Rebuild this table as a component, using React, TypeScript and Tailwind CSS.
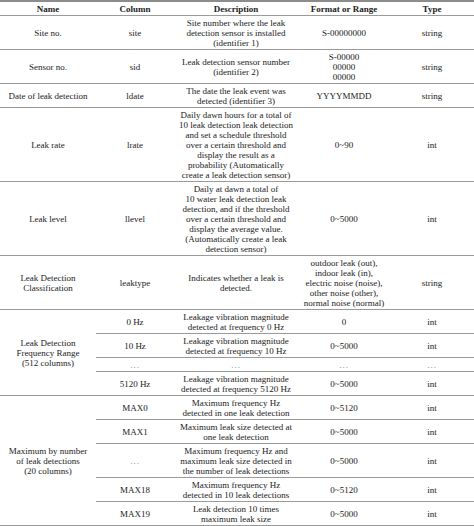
import React from 'react';

type Row = {
  name?: React.ReactNode;
  span?: number;
  col: string;
  desc: React.ReactNode;
  fmt: React.ReactNode;
  type: string;
};

const lines = (...parts: string[]) =>
  parts.map((p, i) => (
    <React.Fragment key={i}>
      {i > 0 && <br />}
      {p}
    </React.Fragment>
  ));

const dots = <span className="tracking-[1px] text-[#777]">...</span>;

const rows: Row[] = [
  {
    name: 'Site no.',
    col: 'site',
    desc: lines('Site number where the leak', 'detection sensor is installed', '(identifier 1)'),
    fmt: 'S-00000000',
    type: 'string',
  },
  {
    name: 'Sensor no.',
    col: 'sid',
    desc: lines('Leak detection sensor number', '(identifier 2)'),
    fmt: lines('S-00000', '00000', '00000'),
    type: 'string',
  },
  {
    name: 'Date of leak detection',
    col: 'ldate',
    desc: lines('The date the leak event was', 'detected (identifier 3)'),
    fmt: 'YYYYMMDD',
    type: 'string',
  },
  {
    name: 'Leak rate',
    col: 'lrate',
    desc: lines(
      'Daily dawn hours for a total of',
      '10 leak detection leak detection',
      'and set a schedule threshold',
      'over a certain threshold and',
      'display the result as a',
      'probability (Automatically',
      'create a leak detection sensor)'
    ),
    fmt: '0~90',
    type: 'int',
  },
  {
    name: 'Leak level',
    col: 'llevel',
    desc: lines(
      'Daily at dawn a total of',
      '10 water leak detection leak',
      'detection, and if the threshold',
      'over a certain threshold and',
      'display the average value.',
      '(Automatically create a leak',
      'detection sensor)'
    ),
    fmt: '0~5000',
    type: 'int',
  },
  {
    name: lines('Leak Detection', 'Classification'),
    col: 'leaktype',
    desc: lines('Indicates whether a leak is', 'detected.'),
    fmt: lines(
      'outdoor leak (out),',
      'indoor leak (in),',
      'electric noise (noise),',
      'other noise (other),',
      'normal noise (normal)'
    ),
    type: 'string',
  },
  {
    name: lines('Leak Detection', 'Frequency Range', '(512 columns)'),
    span: 4,
    col: '0 Hz',
    desc: lines('Leakage vibration magnitude', 'detected at frequency 0 Hz'),
    fmt: '0',
    type: 'int',
  },
  {
    col: '10 Hz',
    desc: lines('Leakage vibration magnitude', 'detected at frequency 10 Hz'),
    fmt: '0~5000',
    type: 'int',
  },
  { col: '...', desc: dots, fmt: dots, type: '...' },
  {
    col: '5120 Hz',
    desc: lines('Leakage vibration magnitude', 'detected at frequency 5120 Hz'),
    fmt: '0~5000',
    type: 'int',
  },
  {
    name: lines('Maximum by number', 'of leak detections', '(20 columns)'),
    span: 6,
    col: 'MAX0',
    desc: lines('Maximum frequency Hz', 'detected in one leak detection'),
    fmt: '0~5120',
    type: 'int',
  },
  {
    col: 'MAX1',
    desc: lines('Maximum leak size detected at', 'one leak detection'),
    fmt: '0~5000',
    type: 'int',
  },
  {
    col: '...',
    desc: lines('Maximum frequency Hz and', 'maximum leak size detected in', 'the number of leak detections'),
    fmt: '0~5000',
    type: 'int',
  },
  {
    col: 'MAX18',
    desc: lines('Maximum frequency Hz', 'detected in 10 leak detections'),
    fmt: '0~5120',
    type: 'int',
  },
  {
    col: 'MAX19',
    desc: lines('Leak detection 10 times', 'maximum leak size'),
    fmt: '0~5000',
    type: 'int',
  },
];

const cell = 'border-b border-[#9b9b9b] pt-[2px] pb-[1px] px-0 text-center align-middle whitespace-nowrap';

export default function App() {
  return (
    <div className="w-[474px] h-[526px] overflow-hidden bg-white">
      <table
        className="w-[474px] table-fixed border-collapse border-t-2 border-t-[#8c8c8c] text-[9px] leading-[10px] text-[#222]"
        style={{ fontFamily: '"Liberation Serif", "DejaVu Serif", serif' }}
      >
        <colgroup>
          <col className="w-[96px]" />
          <col className="w-[78px]" />
          <col className="w-[124px]" />
          <col className="w-[92px]" />
          <col className="w-[84px]" />
        </colgroup>
        <thead>
          <tr className="font-bold">
            <th className={cell}>Name</th>
            <th className={cell}>Column</th>
            <th className={cell}>Description</th>
            <th className={cell}>Format or Range</th>
            <th className={cell}>Type</th>
          </tr>
        </thead>
        <tbody>
          {rows.map((r, i) => (
            <tr key={i}>
              {r.name !== undefined && (
                <td className={cell} rowSpan={r.span ?? 1}>
                  {r.name}
                </td>
              )}
              <td className={cell}>{r.col === '...' ? dots : r.col}</td>
              <td className={cell}>{r.desc}</td>
              <td className={cell}>{r.fmt}</td>
              <td className={cell}>{r.type === '...' ? dots : r.type}</td>
            </tr>
          ))}
        </tbody>
      </table>
    </div>
  );
}
